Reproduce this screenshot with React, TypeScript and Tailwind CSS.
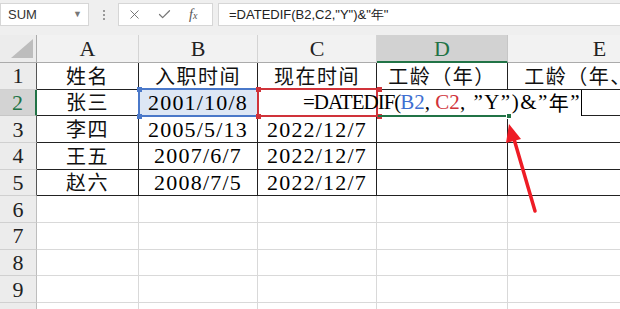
import { X, Check } from 'lucide-react'

const cols = ['A', 'B', 'C', 'D', 'E']

const rows: string[][] = [
  ['姓名', '入职时间', '现在时间', '工龄（年）', '工龄（年、月）'],
  ['张三', '2001/10/8', '', '', ''],
  ['李四', '2005/5/13', '2022/12/7', '', ''],
  ['王五', '2007/6/7', '2022/12/7', '', ''],
  ['赵六', '2008/7/5', '2022/12/7', '', ''],
]

const isLatin = (s: string) => /^[0-9/]+$/.test(s)

function CellText({ text }: { text: string }) {
  if (!text) return null
  if (isLatin(text)) {
    return (
      <span className="whitespace-nowrap font-['Liberation_Serif',serif] text-[22px] tracking-[1.2px] text-black">
        {text}
      </span>
    )
  }
  return (
    <span className="whitespace-nowrap font-['Noto_Sans_CJK_SC',sans-serif] text-[20px] tracking-[1.5px] text-[#111]">
      {text}
    </span>
  )
}

function Corner({ className }: { className: string }) {
  return <div className={`absolute h-[5px] w-[5px] ${className}`} />
}

export default function App() {
  return (
    <div className="relative h-[309px] w-[620px] overflow-hidden bg-white font-['Liberation_Sans',sans-serif]">
      {/* formula bar */}
      <div className="flex h-[35px] items-start bg-[#efefef] pt-[3px]">
        <div className="flex h-[23px] w-[89px] items-center justify-between border border-[#d6d6d6] bg-white pl-[7px] pr-[6px] text-[13px] text-[#333]">
          <span>SUM</span>
          <span className="text-[9px] text-[#777]">▼</span>
        </div>
        <div className="flex h-[23px] w-[29px] flex-col items-center justify-center gap-[2px]">
          <span className="h-[2px] w-[2px] bg-[#9a9a9a]" />
          <span className="h-[2px] w-[2px] bg-[#9a9a9a]" />
          <span className="h-[2px] w-[2px] bg-[#9a9a9a]" />
        </div>
        <div className="flex h-[23px] w-[95px] items-center border border-[#d6d6d6] bg-white text-[#666]">
          <X size={15} strokeWidth={1.4} className="ml-[8px]" />
          <Check size={15} strokeWidth={2} className="ml-[15px] text-[#777]" />
          <span className="ml-[17px] font-['Liberation_Serif',serif] text-[14px] italic text-[#555]">
            f<span className="text-[10px]">x</span>
          </span>
        </div>
        <div className="ml-[5px] flex h-[23px] flex-1 items-center border border-r-0 border-[#d6d6d6] bg-white pl-[10px] text-[13px] text-[#222]">
          =DATEDIF(B2,C2,"Y")&amp;"年"
        </div>
      </div>

      {/* sheet */}
      <div className="grid grid-cols-[37px_102px_119px_119px_131px_184px] grid-rows-[28px_repeat(10,26.67px)]">
        <div className="relative border-r border-b border-[#ababab] bg-[#ececec]">
          <svg className="absolute right-[3px] bottom-[4px]" width="22" height="19" viewBox="0 0 22 19">
            <polygon points="22,0 22,19 0,19" fill="#bdbdbd" />
          </svg>
        </div>
        {cols.map((c) =>
          c === 'D' ? (
            <div
              key={c}
              className="flex items-center justify-center border-r border-b-2 border-r-[#c6c6c6] border-b-[#217346] bg-[#d2d2d2] font-['Liberation_Serif',serif] text-[22px] text-[#217346]"
            >
              {c}
            </div>
          ) : (
            <div
              key={c}
              className="flex items-center justify-center border-r border-b border-r-[#d4d4d4] border-b-[#ababab] bg-[#f2f2f2] font-['Liberation_Serif',serif] text-[22px] text-[#222]"
            >
              {c}
            </div>
          ),
        )}

        {Array.from({ length: 10 }).map((_, r) => {
          const n = r + 1
          const inTable = n <= 5
          const active = n === 2
          return [
            <div
              key={`h${n}`}
              className={
                active
                  ? 'flex items-center justify-center border-r-2 border-b border-r-[#217346] border-b-[#c6c6c6] bg-[#d3d3d3] font-["Liberation_Serif",serif] text-[22px] text-[#217346]'
                  : `flex items-center justify-center border-r border-b border-b-[#d0d0d0] bg-[#ececec] font-["Liberation_Serif",serif] text-[22px] text-[#222] ${
                      inTable ? 'border-r-[#555]' : 'border-r-[#bdbdbd]'
                    }`
              }
            >
              {n < 10 ? n : ''}
            </div>,
            ...cols.map((c, ci) => {
              const text = inTable ? rows[r][ci] : ''
              const bg = n === 2 && c === 'B' ? 'bg-[#dde7f5]' : 'bg-white'
              return (
                <div
                  key={`${c}${n}`}
                  className={`flex items-center justify-center overflow-visible border-r border-b ${bg} ${
                    inTable ? 'border-[#222]' : 'border-[#d9d9d9]'
                  }`}
                >
                  <CellText text={text} />
                </div>
              )
            }),
          ]
        })}
      </div>

      {/* B2 reference box */}
      <div className="absolute top-[88px] left-[138px] h-[29px] w-[121px] border-2 border-[#4a78c9]">
        <Corner className="-top-[3.5px] -left-[3.5px] bg-[#4a78c9]" />
        <Corner className="-top-[3.5px] -right-[3.5px] bg-[#4a78c9]" />
        <Corner className="-bottom-[3.5px] -left-[3.5px] bg-[#4a78c9]" />
        <Corner className="-right-[3.5px] -bottom-[3.5px] bg-[#4a78c9]" />
      </div>

      {/* editor area */}
      <div className="absolute top-[90px] left-[378px] h-[26px] w-[204px] border-r border-black bg-white" />

      {/* C2 reference box */}
      <div className="absolute top-[88px] left-[257px] h-[29px] w-[121px] border-2 border-r-0 border-[#d0333a]">
        <Corner className="-top-[3.5px] -left-[3.5px] bg-[#d0333a]" />
        <Corner className="-top-[3.5px] -right-[3.5px] bg-[#d0333a]" />
        <Corner className="-bottom-[3.5px] -left-[3.5px] bg-[#d0333a]" />
        <Corner className="-right-[3.5px] -bottom-[3.5px] bg-[#d0333a]" />
      </div>
      <div className="absolute top-[88px] left-[376px] h-[29px] w-[2px] bg-[#d0333a]" />

      {/* D2 active cell bottom + fill handle */}
      <div className="absolute top-[115px] left-[378px] h-[2px] w-[130px] bg-[#217346]" />
      <div className="absolute top-[113px] left-[506px] h-[6px] w-[6px] border border-white bg-[#217346]" />

      {/* formula being typed */}
      <div className="absolute top-[89px] left-[303px] flex h-[28px] items-center whitespace-nowrap font-['Liberation_Serif',serif] text-[21px] text-black">
        <span className="tracking-[-1px]">=DATEDIF(</span>
        <span className="text-[#3f6fd1]">B2</span>
        <span>,&nbsp;</span>
        <span className="text-[#d0333a]">C2</span>
        <span className="tracking-[1.5px]">,&nbsp;”Y”)&amp;”</span>
        <span className="font-['Noto_Sans_CJK_SC',sans-serif] text-[20px] tracking-[1.5px]">年</span>
        <span>”</span>
      </div>

      {/* red arrow */}
      <svg className="absolute top-0 left-0" width="620" height="309" viewBox="0 0 620 309">
        <line x1="535" y1="211" x2="514" y2="139" stroke="#ee1c25" strokeWidth="3.5" strokeLinecap="round" />
        <polygon points="509,124 521,139 506,143" fill="#ee1c25" />
      </svg>
    </div>
  )
}
